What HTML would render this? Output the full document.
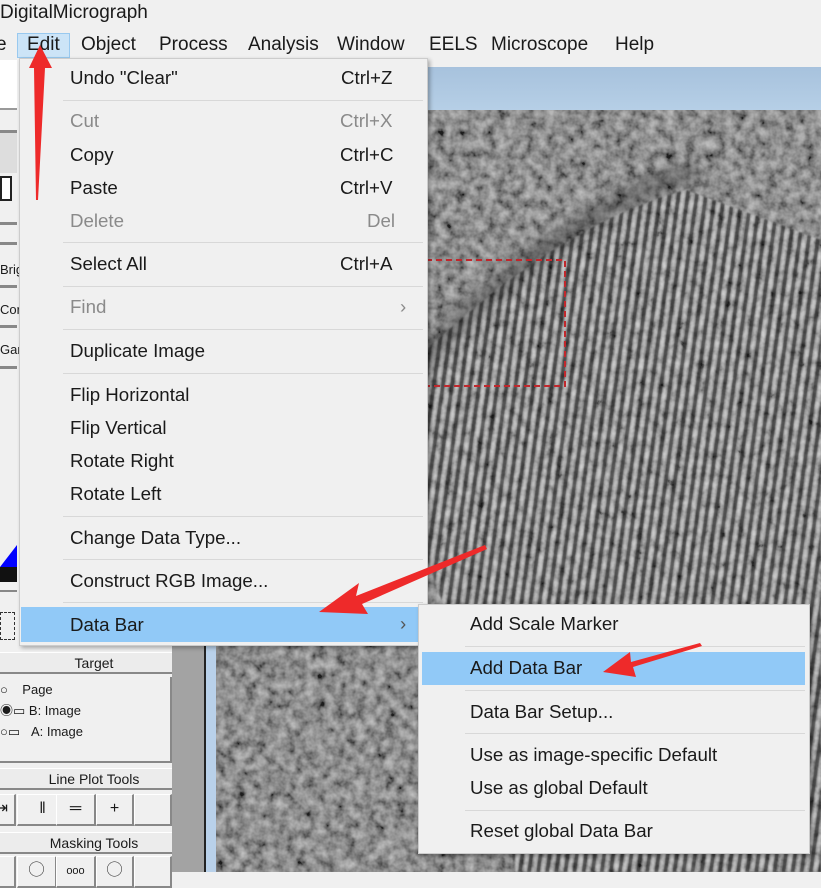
<!DOCTYPE html>
<html><head><meta charset="utf-8"><style>
*{margin:0;padding:0;box-sizing:border-box}
body{width:821px;height:872px;overflow:hidden;background:#f0f0f0;position:relative;font-family:"Liberation Sans","Noto Sans CJK SC",sans-serif;color:#1a1a1a}
.a{position:absolute;white-space:nowrap}
.t{font-size:18.7px;line-height:22px}
.g{color:#8a8a8a}
.sep{position:absolute;height:1px;background:#d8d8d8}
.lp{font-size:13px;line-height:16px}
.hdr{position:absolute;left:0;width:172px;height:22px;background:#ececec;border-top:1px solid #fff;border-bottom:2px solid #888;font-size:14px;text-align:center;line-height:20px;padding-left:16px}
.btn{position:absolute;height:32px;width:52px;background:#f0f0f0;border:1px solid #fff;border-right:2px solid #888;border-bottom:2px solid #888;text-align:center;font-size:16px;line-height:28px}
</style></head><body>
<div class="a" style="left:0;top:0;font-size:19px;line-height:26px">DigitalMicrograph</div>
<div class="a" style="left:0;top:33px;width:821px;height:24px;font-size:19px;line-height:24px">
<span class="a" style="left:-4px">e</span>
<span class="a" style="left:17px;top:0;width:53px;height:25px;background:#cce4f7;border:1px solid #99c9ef"></span>
<span class="a" style="left:27px">Edit</span>
<span class="a" style="left:81px">Object</span>
<span class="a" style="left:159px">Process</span>
<span class="a" style="left:248px">Analysis</span>
<span class="a" style="left:337px">Window</span>
<span class="a" style="left:429px">EELS</span>
<span class="a" style="left:491px">Microscope</span>
<span class="a" style="left:615px">Help</span>
</div>
<!-- left panel -->
<div class="a" style="left:0;top:58px;width:172px;height:814px;background:#f0f0f0"></div>
<div class="a" style="left:0;top:60px;width:17px;height:48px;background:#fff"></div>
<div class="a" style="left:0;top:108px;width:17px;height:2px;background:#999"></div>
<div class="a" style="left:0;top:130px;width:17px;height:3px;background:#888"></div>
<div class="a" style="left:0;top:133px;width:17px;height:40px;background:#ddd"></div>
<div class="a" style="left:0;top:176px;width:12px;height:25px;border:2px solid #222;background:#fff"></div>
<div class="a" style="left:0;top:222px;width:17px;height:3px;background:#888"></div>
<div class="a" style="left:0;top:242px;width:17px;height:3px;background:#888"></div>
<div class="a lp" style="left:0;top:262px">Brig</div>
<div class="a" style="left:0;top:285px;width:17px;height:3px;background:#888"></div>
<div class="a lp" style="left:0;top:302px">Cor</div>
<div class="a" style="left:0;top:325px;width:17px;height:3px;background:#888"></div>
<div class="a lp" style="left:0;top:342px">Gar</div>
<div class="a" style="left:0;top:366px;width:17px;height:3px;background:#888"></div>
<div class="a" style="left:0;top:545px;width:17px;height:0;border-bottom:22px solid #0000ff;border-left:17px solid transparent"></div>
<div class="a" style="left:0;top:567px;width:17px;height:15px;background:#111"></div>
<div class="a" style="left:0;top:590px;width:17px;height:2px;background:#888"></div>
<div class="a" style="left:0;top:612px;width:15px;height:28px;border:1px dashed #333"></div>
<div class="hdr" style="top:652px">Target</div>
<div class="a" style="left:0;top:677px;width:172px;height:86px;background:#f0f0f0;border-bottom:2px solid #888;border-right:2px solid #888"></div>
<div class="a lp" style="left:0;top:682px">○ &nbsp;&nbsp;&nbsp;Page</div>
<div class="a lp" style="left:0;top:703px">◉▭ B: Image</div>
<div class="a lp" style="left:0;top:724px">○▭ &nbsp;&nbsp;A: Image</div>
<div class="hdr" style="top:768px">Line Plot Tools</div>
<div class="btn" style="left:-36px;top:794px;text-align:right;padding-right:6px">⇥</div>
<div class="btn" style="left:17px;top:794px">‖</div>
<div class="btn" style="left:56px;top:794px;width:40px">═</div>
<div class="btn" style="left:96px;top:794px;width:38px">+</div>
<div class="btn" style="left:134px;top:794px;width:38px"></div>
<div class="hdr" style="top:832px">Masking Tools</div>
<div class="btn" style="left:-36px;top:856px"></div>
<div class="btn" style="left:17px;top:856px;width:40px">◯</div>
<div class="btn" style="left:56px;top:856px;width:40px;font-size:11px">ooo</div>
<div class="btn" style="left:96px;top:856px;width:38px">◯</div>
<div class="btn" style="left:134px;top:856px;width:38px"></div>
<div class="a" style="left:172px;top:58px;width:32px;height:814px;background:#a3a3a3"></div>
<div class="a" style="left:204px;top:58px;width:2px;height:814px;background:#222"></div>
<div class="a" style="left:206px;top:58px;width:10px;height:814px;background:#b9d1ea"></div>
<div class="a" style="left:206px;top:67px;width:615px;height:43px;background:linear-gradient(#a7c2dd,#b6cfe6)"></div>
<!-- image -->
<svg class="a" style="left:216px;top:110px" width="605" height="762">
<defs>
<filter id="n"><feTurbulence type="fractalNoise" baseFrequency="0.1" numOctaves="3" seed="3"/><feColorMatrix type="matrix" values="1.1 0 0 0 -0.18 1.1 0 0 0 -0.18 1.1 0 0 0 -0.18 0 0 0 0 1"/></filter>
<filter id="b"><feGaussianBlur stdDeviation="0.9"/></filter>
<filter id="bb"><feGaussianBlur stdDeviation="8"/></filter>
<pattern id="s" width="9" height="9" patternUnits="userSpaceOnUse" patternTransform="rotate(8)"><rect width="4" height="9" fill="#111" opacity=".55"/><rect x="5" width="3" height="9" fill="#eee" opacity=".4"/></pattern>
</defs>
<rect width="605" height="762" filter="url(#n)"/>
<rect width="605" height="762" fill="#5e5e5e" opacity=".3"/>
<path d="M150 300 Q320 120 470 80 L605 130 L605 762 L300 762 Q250 520 150 300 Z" fill="url(#s)" filter="url(#b)"/>
<path d="M190 270 Q330 110 480 60" stroke="#1e1e1e" stroke-width="16" fill="none" opacity=".45" filter="url(#bb)"/>
<rect x="0" y="150" width="349" height="126" fill="none" stroke="#c0282d" stroke-width="2" stroke-dasharray="6 4"/>
</svg>
<!-- edit menu -->
<div class="a" style="left:19px;top:58px;width:409px;height:588px;background:#f0f0f0;border:1px solid #ccc;box-shadow:2px 2px 4px rgba(0,0,0,.3)"></div>
<div class="a t" style="left:70px;top:67px">Undo "Clear"</div><div class="a t" style="left:341px;top:67px">Ctrl+Z</div>
<div class="sep" style="left:63px;top:100px;width:360px"></div>
<div class="a t g" style="left:70px;top:110px">Cut</div><div class="a t g" style="left:340px;top:110px">Ctrl+X</div>
<div class="a t" style="left:70px;top:144px">Copy</div><div class="a t" style="left:340px;top:144px">Ctrl+C</div>
<div class="a t" style="left:70px;top:177px">Paste</div><div class="a t" style="left:340px;top:177px">Ctrl+V</div>
<div class="a t g" style="left:70px;top:210px">Delete</div><div class="a t g" style="left:367px;top:210px">Del</div>
<div class="sep" style="left:63px;top:242px;width:360px"></div>
<div class="a t" style="left:70px;top:253px">Select All</div><div class="a t" style="left:340px;top:253px">Ctrl+A</div>
<div class="sep" style="left:63px;top:286px;width:360px"></div>
<div class="a t g" style="left:70px;top:296px">Find</div><div class="a t g" style="left:400px;top:296px">›</div>
<div class="sep" style="left:63px;top:329px;width:360px"></div>
<div class="a t" style="left:70px;top:340px">Duplicate Image</div>
<div class="sep" style="left:63px;top:373px;width:360px"></div>
<div class="a t" style="left:70px;top:384px">Flip Horizontal</div>
<div class="a t" style="left:70px;top:417px">Flip Vertical</div>
<div class="a t" style="left:70px;top:450px">Rotate Right</div>
<div class="a t" style="left:70px;top:483px">Rotate Left</div>
<div class="sep" style="left:63px;top:516px;width:360px"></div>
<div class="a t" style="left:70px;top:527px">Change Data Type...</div>
<div class="sep" style="left:63px;top:559px;width:360px"></div>
<div class="a t" style="left:70px;top:570px">Construct RGB Image...</div>
<div class="sep" style="left:63px;top:602px;width:360px"></div>
<div class="a" style="left:21px;top:607px;width:405px;height:35px;background:#91c9f7"></div>
<div class="a t" style="left:70px;top:614px">Data Bar</div><div class="a t" style="left:400px;top:613px;color:#555">›</div>
<!-- submenu -->
<div class="a" style="left:418px;top:604px;width:392px;height:250px;background:#f0f0f0;border:1px solid #ccc;box-shadow:2px 2px 4px rgba(0,0,0,.3)"></div>
<div class="a t" style="left:470px;top:613px">Add Scale Marker</div>
<div class="sep" style="left:465px;top:646px;width:340px"></div>
<div class="a" style="left:422px;top:652px;width:383px;height:33px;background:#91c9f7"></div>
<div class="a t" style="left:470px;top:657px">Add Data Bar</div>
<div class="sep" style="left:465px;top:690px;width:340px"></div>
<div class="a t" style="left:470px;top:701px">Data Bar Setup...</div>
<div class="sep" style="left:465px;top:733px;width:340px"></div>
<div class="a t" style="left:470px;top:744px">Use as image-specific Default</div>
<div class="a t" style="left:470px;top:777px">Use as global Default</div>
<div class="sep" style="left:465px;top:810px;width:340px"></div>
<div class="a t" style="left:470px;top:820px">Reset global Data Bar</div>
<!-- arrows -->
<svg class="a" style="left:0;top:0" width="821" height="872">
<g fill="#ee2a2a">
<polygon points="36,200 34,68 29,68 40,45 52,68 45,68 38,200"/>
<polygon points="485,545 356,596 359,583 319,612 368,614 362,604 487,549"/>
<polygon points="700,643 631,662 630,652 603,672 636,677 633,667 702,646"/>
</g>
</svg>
</body></html>
